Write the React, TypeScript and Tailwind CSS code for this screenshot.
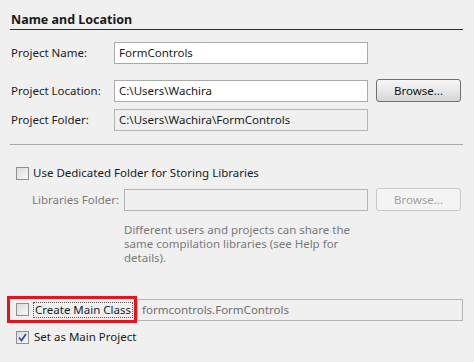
import React from "react";

const font = { fontFamily: '"Noto Sans", "Liberation Sans", sans-serif' };

function Checkbox({ checked }: { checked?: boolean }) {
  return (
    <div className="w-[13px] h-[13px] border border-[#8e8f8f] bg-gradient-to-br from-[#dcdcdc] to-[#f8f8f8] flex items-center justify-center shrink-0">
      {checked && (
        <svg width="9" height="9" viewBox="0 0 9 9">
          <path d="M1 4.5 L3.5 7.5 L8 1" stroke="#2a4fa8" strokeWidth="1.8" fill="none" />
        </svg>
      )}
    </div>
  );
}

function Button({ children, disabled }: { children: React.ReactNode; disabled?: boolean }) {
  return (
    <div
      className={
        "w-[85px] h-[23px] rounded-[3px] border flex items-center justify-center " +
        (disabled
          ? "border-[#c8c8c8] bg-[#f4f4f4] text-[#a0a0a0]"
          : "border-[#707070] bg-gradient-to-b from-[#f6f6f6] via-[#e8e8e8] to-[#d6d6d6] text-[#111]")
      }
    >
      {children}
    </div>
  );
}

export default function App() {
  return (
    <div className="w-[474px] h-[362px] bg-[#f0f0f0] text-[11.5px] text-[#1a1a1a] overflow-hidden whitespace-nowrap" style={font}>
      <div className="pl-[11px] pt-[12px] font-bold text-[12.5px] leading-[16px]">Name and Location</div>
      <div className="ml-[10px] mt-[1px] w-[453px] h-[1px] bg-[#2c2c2c]" />

      <div className="flex items-center mt-[12px] h-[22px]">
        <div className="pl-[11px] w-[114px]">Project Name:</div>
        <div className="w-[254px] h-[22px] border border-[#a9a9a9] bg-white pl-[4px] flex items-center">FormControls</div>
      </div>

      <div className="flex items-center mt-[15px] h-[23px]">
        <div className="pl-[11px] w-[114px]">Project Location:</div>
        <div className="w-[254px] h-[22px] border border-[#a9a9a9] bg-white pl-[4px] flex items-center">C:\Users\Wachira</div>
        <div className="ml-[8px]">
          <Button>Browse...</Button>
        </div>
      </div>

      <div className="flex items-center mt-[7px] h-[22px]">
        <div className="pl-[11px] w-[114px]">Project Folder:</div>
        <div className="w-[254px] h-[22px] border border-[#b4b4b4] bg-[#f0f0f0] pl-[4px] flex items-center">C:\Users\Wachira\FormControls</div>
      </div>

      <div className="ml-[10px] mt-[13px] w-[453px] h-[1px] bg-[#a8a8a8]" />

      <div className="flex items-center mt-[21px] h-[14px] pl-[16px] gap-[4px]">
        <Checkbox />
        <span>Use Dedicated Folder for Storing Libraries</span>
      </div>

      <div className="flex items-center mt-[8px] h-[23px]">
        <div className="pl-[32px] w-[124px] text-[#7a7a7a]">Libraries Folder:</div>
        <div className="w-[244px] h-[22px] border border-[#b4b4b4] bg-[#f0f0f0]" />
        <div className="ml-[8px]">
          <Button disabled>Browse...</Button>
        </div>
      </div>

      <div className="pl-[124px] mt-[12px] text-[#7a7a7a] leading-[14px]">
        <div>Different users and projects can share the</div>
        <div>same compilation libraries (see Help for</div>
        <div>details).</div>
      </div>

      <div className="flex items-center mt-[31px] h-[27px]">
        <div className="ml-[7px] w-[130px] h-[27px] border-[3px] border-[#e0161e] flex items-center pl-[6px] gap-[4px]">
          <Checkbox />
          <span className="border border-dotted border-[#555] leading-[14px] px-[1px]">Create Main Class</span>
        </div>
        <div className="w-[326px] h-[22px] border border-[#b4b4b4] bg-[#f0f0f0] pl-[4px] flex items-center text-[#6e6e6e]">
          formcontrols.FormControls
        </div>
      </div>

      <div className="flex items-center mt-[7px] h-[14px] pl-[16px] gap-[5px]">
        <Checkbox checked />
        <span>Set as Main Project</span>
      </div>
    </div>
  );
}
